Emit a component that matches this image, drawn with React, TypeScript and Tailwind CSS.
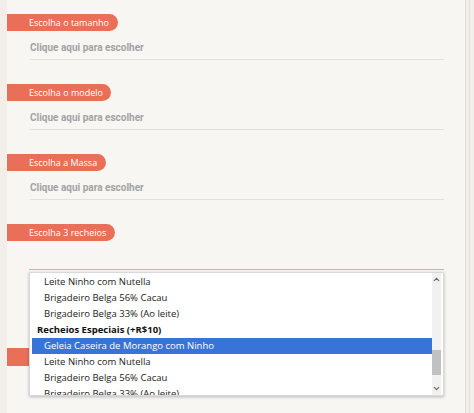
import { ChevronUp, ChevronDown } from 'lucide-react'

const sections = [
    { title: 'Escolha o tamanho', w: 'w-[111px]' },
    { title: 'Escolha o modelo', w: 'w-[104px]' },
    { title: 'Escolha a Massa', w: 'w-[99px]' },
]

type Opt = { label: string; group?: boolean; selected?: boolean }

const options: Opt[] = [
    { label: 'Leite Ninho com Nutella' },
    { label: 'Brigadeiro Belga 56% Cacau' },
    { label: 'Brigadeiro Belga 33% (Ao leite)' },
    { label: 'Recheios Especiais (+R$10)', group: true },
    { label: 'Geleia Caseira de Morango com Ninho', selected: true },
    { label: 'Leite Ninho com Nutella' },
    { label: 'Brigadeiro Belga 56% Cacau' },
    { label: 'Brigadeiro Belga 33% (Ao leite)' },
]

function Pill({ text, w }: { text: string; w: string }) {
    return (
        <div
            className={`flex h-[17px] ${w} items-center whitespace-nowrap rounded-r-full bg-[#e96f58] pl-[22px] text-[9px] text-white`}
            style={{ fontFamily: '"Open Sans", sans-serif' }}
        >
            {text}
        </div>
    )
}

function Section({ title, w }: { title: string; w: string }) {
    return (
        <div className="mb-[24px]">
            <Pill text={title} w={w} />
            <div className="ml-[23px] mt-[10px] w-[414px] border-b border-[#e4e1dc] pb-[5px]">
                <div
                    className="h-[13px] text-[10px] font-bold leading-[13px] text-[#a3a3a3]"
                    style={{ fontFamily: 'Roboto, "Liberation Sans", sans-serif' }}
                >
                    Clique aqui para escolher
                </div>
            </div>
        </div>
    )
}

export default function App() {
    return (
        <div className="flex h-[413px] w-[474px] overflow-hidden bg-[#f2efea]">
            <div className="w-[7px] shrink-0" />
            <div className="relative w-[459px] shrink-0 border-r border-[#e2ded6] bg-[#f7f6f3] pt-[14px]">
                {sections.map(s => (
                    <Section key={s.title} title={s.title} w={s.w} />
                ))}

                {/* Recheios */}
                <div>
                    <Pill text="Escolha 3 recheios" w="w-[108px]" />
                    <div className="ml-[22px] mt-[28px] w-[415px] border-b border-[#e9a595]" />
                </div>

                {/* next section pill, hidden under the list */}
                <div className="mt-[78px] h-[18px] w-[110px] rounded-r-full bg-[#e96f58]" />

                {/* Open dropdown list */}
                <div
                    className="absolute left-[22px] top-[272px] flex h-[124px] w-[415px] border border-[#d9d9d9] bg-white shadow-[0_1px_3px_rgba(0,0,0,0.25)]"
                    style={{ fontFamily: '"Open Sans", sans-serif' }}
                >
                    <div className="flex-1 overflow-hidden pl-[2px] pt-[1px]">
                        {options.map((o, i) => (
                            <div
                                key={i}
                                className={
                                    o.group
                                        ? 'h-[16px] pl-[5px] text-[9.5px] font-bold leading-[16px] text-[#111]'
                                        : o.selected
                                          ? 'h-[16px] bg-[#3874d8] pl-[12px] text-[9.5px] leading-[16px] text-white'
                                          : 'h-[16px] pl-[12px] text-[9.5px] leading-[16px] text-[#222]'
                                }
                            >
                                {o.label}
                            </div>
                        ))}
                    </div>
                    <div className="mr-[2px] flex w-[9px] flex-col bg-[#f1f1f1] py-[2px]">
                        <ChevronUp className="h-[9px] w-[9px] text-[#666]" strokeWidth={3} />
                        <div className="mt-[66px] h-[25px] bg-[#c1c1c1]" />
                        <div className="flex-1" />
                        <ChevronDown className="h-[9px] w-[9px] text-[#666]" strokeWidth={3} />
                    </div>
                </div>
            </div>
            <div className="ml-[3px] w-px shrink-0 bg-[#e6e2da]" />
            <div className="flex-1" />
        </div>
    )
}
